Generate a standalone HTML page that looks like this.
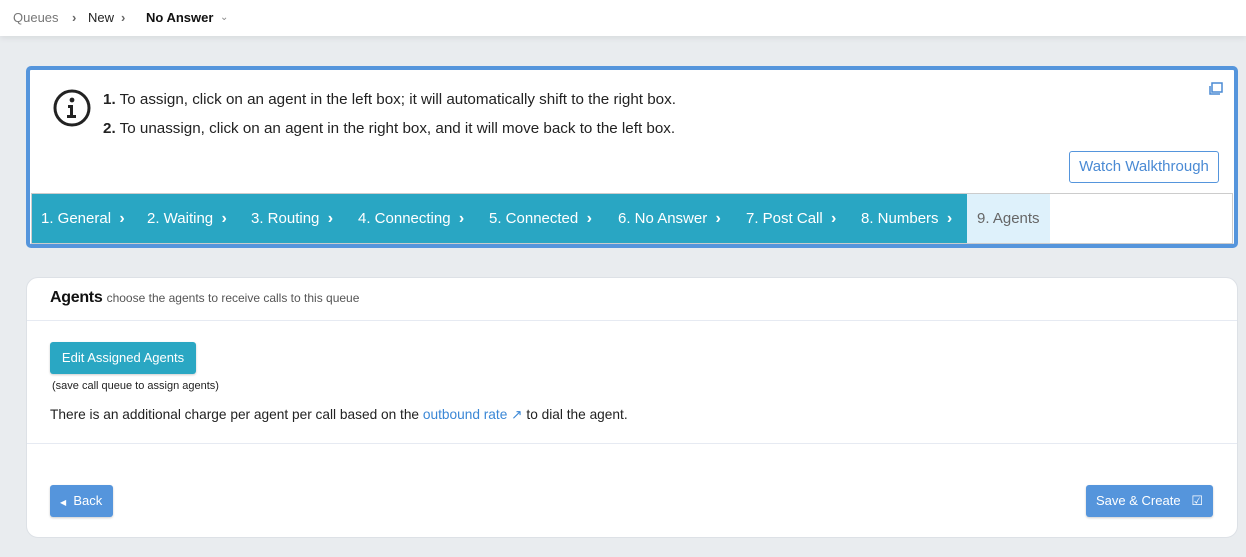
<!DOCTYPE html>
<html><head><style>
*{box-sizing:border-box;margin:0;padding:0}
body{width:1246px;height:557px;background:#e9ecef;font-family:"Liberation Sans",sans-serif;position:relative;overflow:hidden}
.top{position:absolute;left:0;top:0;width:1246px;height:36px;background:#fff;box-shadow:0 2px 6px rgba(0,0,0,.08);font-size:13px}
.top span{position:absolute;top:10px}
.info{position:absolute;left:26px;top:66px;width:1212px;height:182px;border:4px solid #5595dc;border-radius:5px;background:#fff}
.ln{position:absolute;left:73px;font-size:15.2px;color:#222}
.ww{position:absolute;left:1039px;top:81px;width:150px;height:32px;border:1px solid #5595dc;border-radius:3px;color:#4a8ad4;font-size:15px;text-align:center;line-height:30px}
.tabs{position:absolute;left:1px;top:123px;width:1202px;height:51px;border:1px solid #ccc;background:#fff}
.teal{position:absolute;left:0;top:0;width:935px;height:49px;background:#29a6c3}
.tab{position:absolute;top:16px;color:#fff;font-size:15px}
.tab b{font-size:16px}
.card{position:absolute;left:26px;top:277px;width:1212px;height:261px;background:#fff;border:1px solid #dde1e6;border-radius:12px}
.btn{position:absolute;color:#fff;font-size:13px;border-radius:3px;box-shadow:0 1px 2px rgba(0,0,0,.2)}
</style></head><body>
<div class="top">
<span style="left:13px;color:#777">Queues</span>
<span style="left:72px;color:#666;font-weight:bold">›</span>
<span style="left:88px;color:#222">New</span>
<span style="left:121px;color:#666;font-weight:bold">›</span>
<span style="left:146px;color:#111;font-weight:bold">No Answer</span>
<span style="left:220px;color:#888;font-size:10px;top:12px">⌄</span>
</div>
<div class="info">
<svg style="position:absolute;left:22px;top:18px" width="40" height="40" viewBox="0 0 40 40"><circle cx="20" cy="20" r="17" fill="none" stroke="#222" stroke-width="3"/><circle cx="20" cy="12" r="2.4" fill="#222"/><path d="M16 17h5v10h3v3h-9v-3h3v-7h-2z" fill="#222"/></svg>
<div class="ln" style="top:21px"><b>1.</b> To assign, click on an agent in the left box; it will automatically shift to the right box.</div>
<div class="ln" style="top:50px"><b>2.</b> To unassign, click on an agent in the right box, and it will move back to the left box.</div>
<svg style="position:absolute;left:1178px;top:11px" width="16" height="16" viewBox="0 0 16 16"><rect x="4" y="2" width="10" height="9" fill="none" stroke="#4a8ad4" stroke-width="1.5"/><path d="M2 5v8h10" fill="none" stroke="#4a8ad4" stroke-width="1.5"/></svg>
<div class="ww">Watch Walkthrough</div>
<div class="tabs">
<div class="teal"></div>
<span class="tab" style="left:9px">1. General&nbsp;&nbsp;<b>›</b></span>
<span class="tab" style="left:115px">2. Waiting&nbsp;&nbsp;<b>›</b></span>
<span class="tab" style="left:219px">3. Routing&nbsp;&nbsp;<b>›</b></span>
<span class="tab" style="left:326px">4. Connecting&nbsp;&nbsp;<b>›</b></span>
<span class="tab" style="left:457px">5. Connected&nbsp;&nbsp;<b>›</b></span>
<span class="tab" style="left:586px">6. No Answer&nbsp;&nbsp;<b>›</b></span>
<span class="tab" style="left:714px">7. Post Call&nbsp;&nbsp;<b>›</b></span>
<span class="tab" style="left:829px">8. Numbers&nbsp;&nbsp;<b>›</b></span>
<div style="position:absolute;left:935px;top:0;width:83px;height:49px;background:#def1fb"></div>
<span class="tab" style="left:945px;color:#666">9. Agents</span>
</div>
</div>
<div class="card">
<div style="position:absolute;left:23px;top:11px;font-size:16px;color:#111;font-weight:bold;letter-spacing:-0.3px">Agents <span style="font-size:12px;color:#555;font-weight:normal;letter-spacing:0">choose the agents to receive calls to this queue</span></div>
<div style="position:absolute;left:0;top:42px;width:1210px;border-top:1px solid #e6eaf2"></div>
<div class="btn" style="left:23px;top:64px;width:146px;height:32px;background:#2aa7c3;line-height:32px;text-align:center">Edit Assigned Agents</div>
<div style="position:absolute;left:25px;top:102px;font-size:11px;color:#222">(save call queue to assign agents)</div>
<div style="position:absolute;left:23px;top:129px;font-size:13.7px;color:#222">There is an additional charge per agent per call based on the <span style="color:#3a87d6">outbound rate ↗</span> to dial the agent.</div>
<div style="position:absolute;left:0;top:165px;width:1210px;border-top:1px solid #e6eaf2"></div>
<div class="btn" style="left:23px;top:207px;width:63px;height:32px;background:#5595dc;line-height:32px;padding-left:10px"><span style="font-size:8px">◀</span>&nbsp;&nbsp;Back</div>
<div class="btn" style="left:1059px;top:207px;width:127px;height:32px;background:#5595dc;line-height:32px;padding-left:10px">Save &amp; Create&nbsp;&nbsp;&nbsp;☑</div>
</div>
</body></html>
